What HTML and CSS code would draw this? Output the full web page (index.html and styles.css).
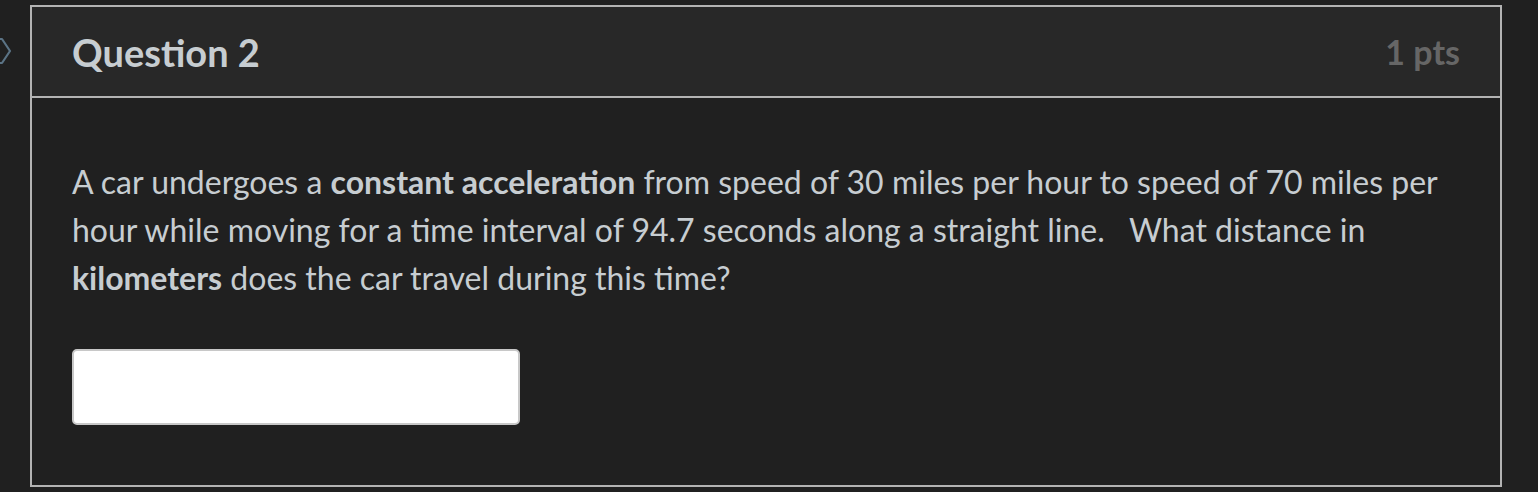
FILE: index.html
```html
<!DOCTYPE html>
<html>
<head>
<meta charset="utf-8">
<link rel="stylesheet" href="styles.css">
</head>
<body>
<div class="page">
  <div class="gutter">
    <svg class="chev" width="14" height="28" viewBox="0 0 14 28">
      <path d="M-4 2 L2 2 L10 14 L2 26 L-4 26" fill="none" stroke="#5b7385" stroke-width="2.2" stroke-linejoin="round"/>
    </svg>
  </div>
  <div class="question">
    <div class="q-header">
      <div class="q-title">Question 2</div>
      <div class="q-pts">1 pts</div>
    </div>
    <div class="q-body">
      <p class="q-text">A car undergoes a <strong>constant acceleration</strong> from speed of 30 miles per hour to speed of 70 miles per hour while moving for a time interval of 94.7 seconds along a straight line. &nbsp; What distance in <strong>kilometers</strong> does the car travel during this time?</p>
      <input class="q-input" type="text">
    </div>
  </div>
</div>
</body>
</html>
```
FILE: styles.css
```css
html, body {
  margin: 0;
  padding: 0;
  background: #202020;
}
body {
  font-family: Lato, "Open Sans", sans-serif;
  color: #c7cdd1;
}
.page {
  display: flex;
  padding-top: 5px;
  height: 487px;
  box-sizing: border-box;
}
.gutter {
  width: 30px;
  flex: none;
  padding-top: 32px;
}
.chev {
  display: block;
}
.question {
  width: 1472px;
  box-sizing: border-box;
  border: 2px solid #b3b3b3;
  display: flex;
  flex-direction: column;
}
.q-header {
  background: #282828;
  border-bottom: 2px solid #b3b3b3;
  height: 91px;
  box-sizing: border-box;
  display: flex;
  align-items: center;
  justify-content: space-between;
  padding: 0 40px 0 40px;
}
.q-title {
  font-size: 38px;
  font-weight: 700;
  color: #c7cdd1;
}
.q-pts {
  font-size: 34px;
  font-weight: 700;
  color: #666666;
}
.q-body {
  flex: 1;
  background: #202020;
  padding: 60px 40px 0 40px;
}
.q-text {
  margin: 0;
  font-size: 32px;
  line-height: 48px;
  color: #c7cdd1;
}
.q-text strong {
  font-weight: 700;
}
.q-input {
  display: block;
  margin-top: 47px;
  width: 448px;
  height: 76px;
  box-sizing: border-box;
  background: #fff;
  border: 2px solid #c8c8c8;
  border-radius: 5px;
  padding: 0;
}
```
